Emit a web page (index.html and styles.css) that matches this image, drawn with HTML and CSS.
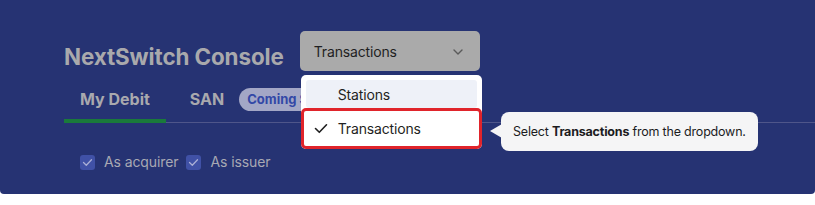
FILE: index.html
```html
<!DOCTYPE html>
<html>
<head>
<meta charset="utf-8">
<link rel="stylesheet" href="styles.css">
</head>
<body>
<div class="panel">
  <div class="header">
    <h1 class="title">NextSwitch Console</h1>
    <div class="select-wrap">
      <div class="select">
        <span>Transactions</span>
        <svg class="chev" width="10" height="6" viewBox="0 0 10 6"><path d="M1 1l4 4 4-4" fill="none" stroke="#5a5a5a" stroke-width="1.4" stroke-linecap="round" stroke-linejoin="round"/></svg>
      </div>
      <div class="menu">
        <div class="item item-hover"><span class="check"></span><span>Stations</span></div>
        <div class="item item-selected">
          <span class="check"><svg width="14" height="11" viewBox="0 0 14 11"><path d="M1.5 5.5l3.8 3.8L12.5 1.8" fill="none" stroke="#1f1f1f" stroke-width="1.6" stroke-linecap="round" stroke-linejoin="round"/></svg></span>
          <span>Transactions</span>
        </div>
      </div>
    </div>
  </div>
  <div class="tabs">
    <div class="tab active">My Debit</div>
    <div class="tab">SAN <span class="badge">Coming Soon</span></div>
  </div>
  <div class="checks">
    <label class="cb"><span class="box"><svg width="11" height="9" viewBox="0 0 11 9"><path d="M1.5 4.5l2.8 2.8L9.5 1.8" fill="none" stroke="#a9aed6" stroke-width="1.3" stroke-linecap="round" stroke-linejoin="round"/></svg></span>As acquirer</label>
    <label class="cb"><span class="box"><svg width="11" height="9" viewBox="0 0 11 9"><path d="M1.5 4.5l2.8 2.8L9.5 1.8" fill="none" stroke="#a9aed6" stroke-width="1.3" stroke-linecap="round" stroke-linejoin="round"/></svg></span>As issuer</label>
  </div>
  <div class="tooltip">Select <b>Transactions</b> from the dropdown.</div>
</div>
</body>
</html>
```
FILE: styles.css
```css
* { box-sizing: border-box; }
html, body { margin: 0; padding: 0; background: #ffffff; }
body { font-family: Inter, "Noto Sans", sans-serif; }

.panel {
  position: relative;
  height: 194px;
  background: #263373;
  border-radius: 0 0 4px 4px;
  padding: 31px 0 0 64px;
}

.header {
  display: flex;
  align-items: flex-start;
  gap: 16px;
  height: 40px;
}

.title {
  margin: 12px 0 0;
  font-size: 22.4px;
  font-weight: 700;
  line-height: 27px;
  color: #a9a9ac;
  letter-spacing: -0.1px;
}

.select-wrap { position: relative; }

.select {
  width: 180px;
  height: 40px;
  background: #aaaaaa;
  border-radius: 5px;
  display: flex;
  align-items: center;
  justify-content: space-between;
  padding: 0 17px 0 14px;
  font-size: 14px;
  letter-spacing: -0.15px;
  color: #1f1f22;
}
.chev { margin-top: 1px; }

.menu {
  position: absolute;
  top: 44px;
  left: 1px;
  width: 181px;
  height: 74px;
  background: #ffffff;
  border-radius: 5px;
  padding: 5px 5px 0;
  z-index: 2;
}

.item {
  display: flex;
  align-items: center;
  font-size: 14px;
  letter-spacing: -0.15px;
  color: #1f1f22;
  height: 28px;
  padding-left: 8px;
}
.check { width: 24px; display: flex; align-items: center; }
.item-hover { background: #eef1f8; border-radius: 3px; }
.item-selected {
  margin: 0 -5px;
  height: 41px;
  border: 3px solid #e0242b;
  border-radius: 5px;
  padding-left: 10px;
}

.tabs {
  display: flex;
  gap: 8px;
  border-bottom: 1px solid #4f568a;
  height: 52px;
  align-items: stretch;
}
.tab {
  position: relative;
  padding: 5px 16px 0;
  display: flex;
  align-items: center;
  gap: 15px;
  font-size: 16px;
  font-weight: 700;
  color: #a9a9ae;
}
.tab.active::after {
  content: "";
  position: absolute;
  left: 0;
  right: 0;
  bottom: -1px;
  height: 4px;
  background: #1a7a3b;
}
.badge {
  background: #a3a7c6;
  color: #3347a6;
  font-size: 13px;
  font-weight: 700;
  border-radius: 12px;
  padding: 4px 8px;
  line-height: 15px;
  white-space: nowrap;
}

.checks {
  display: flex;
  gap: 8px;
  margin-top: 30px;
  padding-left: 16px;
}
.cb {
  display: flex;
  align-items: center;
  gap: 9px;
  font-size: 14px;
  letter-spacing: -0.1px;
  line-height: 18px;
  color: #a8a9b3;
}
.box {
  width: 15px;
  height: 15px;
  border-radius: 3px;
  background: #4051a6;
  display: flex;
  align-items: center;
  justify-content: center;
}

.tooltip {
  position: absolute;
  left: 501px;
  top: 112px;
  width: 257px;
  height: 39px;
  background: #f5f5f6;
  border-radius: 8px;
  font-size: 12.5px;
  letter-spacing: -0.2px;
  line-height: 39px;
  color: #1c1c1e;
  padding-left: 12px;
  white-space: nowrap;
  z-index: 3;
}
.tooltip::before {
  content: "";
  position: absolute;
  left: -11px;
  top: 12px;
  border-top: 7px solid transparent;
  border-bottom: 7px solid transparent;
  border-right: 12px solid #f5f5f6;
}
.tooltip b { font-weight: 700; }
```
